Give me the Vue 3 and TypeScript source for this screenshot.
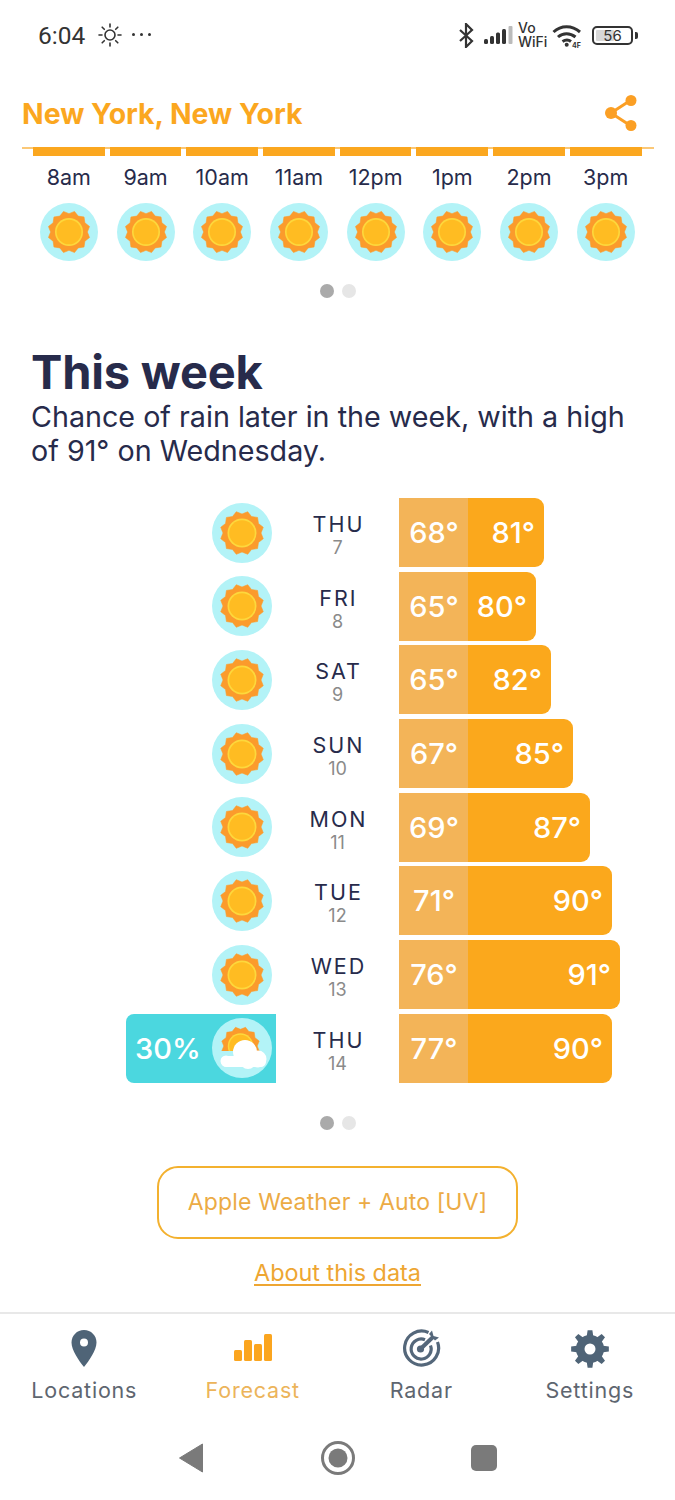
<script setup lang="ts">
const hours = ['8am', '9am', '10am', '11am', '12pm', '1pm', '2pm', '3pm']

interface Day {
  name: string
  date: number
  low: number
  high: number
  end: number
  rain?: number
}

// end = right edge of the temperature bar, measured from the bar's start
const days: Day[] = [
  { name: 'THU', date: 7, low: 68, high: 81, end: 145 },
  { name: 'FRI', date: 8, low: 65, high: 80, end: 137 },
  { name: 'SAT', date: 9, low: 65, high: 82, end: 152 },
  { name: 'SUN', date: 10, low: 67, high: 85, end: 174 },
  { name: 'MON', date: 11, low: 69, high: 87, end: 191 },
  { name: 'TUE', date: 12, low: 71, high: 90, end: 213 },
  { name: 'WED', date: 13, low: 76, high: 91, end: 221 },
  { name: 'THU', date: 14, low: 77, high: 90, end: 213, rain: 30 },
]

const polar = (r: number, a: number, cx = 30, cy = 30) =>
  `${(cx + r * Math.cos(a)).toFixed(2)},${(cy + r * Math.sin(a)).toFixed(2)}`

// 12 pointed sun rays
const sunRays = Array.from({ length: 24 }, (_, i) =>
  polar(i % 2 ? 19 : 22, (i * Math.PI) / 12 - Math.PI / 12),
).join(' ')

// 8 tooth cog for the settings tab
const cogPath = (() => {
  const pts: string[] = []
  for (let i = 0; i < 8; i++) {
    const a = (i * Math.PI) / 4 - Math.PI / 2
    const step = Math.PI / 8
    pts.push(polar(13.5, a - step * 0.62, 20, 20))
    pts.push(polar(19, a - step * 0.32, 20, 20))
    pts.push(polar(19, a + step * 0.32, 20, 20))
    pts.push(polar(13.5, a + step * 0.62, 20, 20))
  }
  return pts.join(' ')
})()
</script>

<template>
  <div class="screen">
    <svg class="defs" width="0" height="0">
      <defs>
        <symbol id="sun-rays" viewBox="0 0 60 60">
          <polygon :points="sunRays" fill="#fb9b2c" stroke="#fb9b2c" stroke-width="0.6" stroke-linejoin="round" />
          <circle cx="30" cy="30" r="14.500" fill="#fdd83c" />
          <circle cx="30" cy="30" r="12.800" fill="#ffbc22" />
        </symbol>
        <clipPath id="half-sun">
          <rect x="0" y="0" width="60" height="33" />
        </clipPath>
      </defs>
    </svg>

    <header class="status">
      <span class="clock">6:04</span>
      <svg class="status-sun" width="24" height="24" viewBox="0 0 24 24" fill="none" stroke="#333" stroke-width="1.6" stroke-linecap="round">
        <circle cx="12" cy="12" r="5" />
        <path d="M12 1v3M12 20v3M1 12h3M20 12h3M4.2 4.2l2.1 2.1M17.7 17.7l2.1 2.1M4.2 19.800l2.100-2.100M17.700 6.300l2.100-2.100" />
      </svg>
      <span class="more"><i></i><i></i><i></i></span>
      <span class="status-right">
        <svg width="16" height="25" viewBox="0 0 16 25" fill="none" stroke="#333" stroke-width="2.200">
          <path d="M2 7l12 11-6 6V1l6 6L2 18" />
        </svg>
        <svg class="signal" width="29" height="19" viewBox="0 0 29 19">
          <rect x="0" y="13" width="4" height="5" rx="1.500" fill="#333" />
          <rect x="6" y="10" width="4" height="8" rx="1.500" fill="#333" />
          <rect x="12" y="6.500" width="4" height="11.500" rx="1.500" fill="#333" />
          <rect x="18" y="3" width="4" height="15" rx="1.500" fill="#333" />
          <rect x="24.500" y="0" width="4" height="18" rx="1" fill="#bbb" />
        </svg>
        <span class="vowifi">Vo<br />WiFi</span>
        <svg class="wifi" width="31" height="25" viewBox="0 0 31 25" fill="none" stroke="#333" stroke-width="3">
          <path d="M1.500 9C9 2 20 2 28 9" />
          <path d="M6 14c5-4.500 12-4.500 17.500 0" />
          <path d="M10.500 18.500c3-2 6-2 8.500 0" />
          <circle cx="14.700" cy="21.800" r="2" fill="#333" stroke="none" />
          <text x="20" y="24.500" font-size="7" font-weight="700" fill="#333" stroke="none">4F</text>
        </svg>
        <span class="battery"><span class="battery-fill"></span><b>56</b></span>
        <i class="battery-cap"></i>
      </span>
    </header>

    <section class="location">
      <h2>New York, New York</h2>
      <svg width="36" height="38" viewBox="0 0 36 38">
        <path d="M27 6L7 19l20 13" fill="none" stroke="#fb9f24" stroke-width="3" />
        <circle cx="27" cy="6.500" r="5.500" fill="#fb9f24" />
        <circle cx="7" cy="19" r="6" fill="#fb9f24" />
        <circle cx="27" cy="31.500" r="5.500" fill="#fb9f24" />
      </svg>
    </section>

    <section class="hours">
      <div v-for="hour in hours" :key="hour" class="hour">
        <span class="hour-bar"></span>
        <span class="hour-label">{{ hour }}</span>
        <span class="badge badge-sm">
          <svg width="58" height="58"><use href="#sun-rays" /></svg>
        </span>
      </div>
    </section>

    <div class="pager pager-top"><i class="on"></i><i></i></div>

    <section class="week">
      <h1>This week</h1>
      <p>Chance of rain later in the week, with a high of 91° on Wednesday.</p>
    </section>

    <section class="days">
      <div v-for="day in days" :key="day.name + day.date" class="day">
        <div class="day-icon" :class="{ rainy: day.rain }">
          <span v-if="day.rain" class="chance">{{ day.rain }}%</span>
          <span class="badge">
            <svg v-if="!day.rain" width="60" height="60"><use href="#sun-rays" /></svg>
            <svg v-else width="60" height="60" viewBox="0 0 60 60">
              <g clip-path="url(#half-sun)">
                <g transform="translate(28.500 28) scale(.88) translate(-30 -30)"><use href="#sun-rays" width="60" height="60" /></g>
              </g>
              <g fill="#fff">
                <circle cx="33" cy="34" r="12" />
                <circle cx="46" cy="41" r="8.500" />
                <circle cx="36" cy="43" r="8" />
                <circle cx="14" cy="43" r="5.500" />
                <rect x="9" y="38" width="45" height="11" rx="5.500" />
              </g>
            </svg>
          </span>
        </div>
        <div class="day-name">
          <span>{{ day.name }}</span>
          <small>{{ day.date }}</small>
        </div>
        <div class="temps" :style="{ width: day.end + 'px' }">
          <span class="low">{{ day.low }}°</span>
          <span class="high">{{ day.high }}°</span>
        </div>
      </div>
    </section>

    <div class="pager pager-week"><i class="on"></i><i></i></div>

    <button class="source">Apple Weather + Auto [UV]</button>
    <a class="about">About this data</a>

    <nav class="tabs">
      <div class="tab">
        <svg width="40" height="40" viewBox="0 0 40 40">
          <path fill-rule="evenodd" d="M20 1c7 0 12.500 5.500 12.500 12.500C32.500 21 25 32 20 38 15 32 7.500 21 7.500 13.500 7.500 6.500 13 1 20 1zm0 8.500a4 4 0 1 0 0 8 4 4 0 0 0 0-8z" fill="#4f6477" />
        </svg>
        <span>Locations</span>
      </div>
      <div class="tab active">
        <svg width="40" height="40" viewBox="0 0 40 40">
          <g fill="#fba51f">
            <rect x="1" y="21" width="8" height="11" rx="1.500" />
            <rect x="11" y="11" width="8" height="21" rx="1.500" />
            <rect x="21" y="15" width="8" height="17" rx="1.500" />
            <rect x="31" y="5" width="8" height="27" rx="1.500" />
          </g>
        </svg>
        <span>Forecast</span>
      </div>
      <div class="tab">
        <svg width="40" height="40" viewBox="0 0 40 40" fill="none" stroke="#54677a" stroke-width="3.200">
          <path d="M27.500 3.500A17 17 0 1 0 36.500 13" />
          <path d="M24 10.800A10 10 0 1 0 29.500 16.500" />
          <circle cx="19.500" cy="20" r="3.600" fill="#54677a" stroke="none" />
          <path d="M20 19.500L32 8" stroke-width="4" />
          <path d="M28 5l3-3.500 1.500 5.500 5.500 1.500-4 3z" fill="#54677a" stroke="none" />
        </svg>
        <span>Radar</span>
      </div>
      <div class="tab">
        <svg width="40" height="40" viewBox="0 0 40 40">
          <polygon :points="cogPath" fill="#4f6477" />
          <circle cx="20" cy="20" r="14" fill="#4f6477" />
          <circle cx="20" cy="20" r="5.500" fill="#fff" />
        </svg>
        <span>Settings</span>
      </div>
    </nav>

    <div class="system-nav">
      <svg width="26" height="30" viewBox="0 0 26 30"><path d="M24.500 1v28L1.500 15z" fill="#7a7a7a" stroke="#7a7a7a" stroke-linejoin="round" /></svg>
      <svg width="36" height="36" viewBox="0 0 36 36">
        <circle cx="18" cy="18" r="15.500" fill="none" stroke="#7a7a7a" stroke-width="3" />
        <circle cx="18" cy="18" r="9.500" fill="#7a7a7a" />
      </svg>
      <span class="square"></span>
    </div>
  </div>
</template>

<style scoped>
.screen {
  width: 675px;
  height: 1500px;
  overflow: hidden;
  background: #fff;
  font-family: Inter, "Liberation Sans", sans-serif;
  color: #272b4b;
  display: flex;
  flex-direction: column;
}

.defs {
  position: absolute;
}

.status {
  height: 70px;
  display: flex;
  align-items: center;
  padding: 0 37px 0 38px;
  color: #333;
}

.clock {
  font-family: Roboto, sans-serif;
  font-size: 24.500px;
  font-weight: 400;
}

.status-sun {
  margin-left: 13px;
}

.more {
  display: flex;
  gap: 5px;
  margin-left: 10px;
  margin-bottom: 2px;
}

.more i {
  width: 3px;
  height: 3px;
  border-radius: 50%;
  background: #333;
}

.status-right {
  margin-left: auto;
  display: flex;
  align-items: center;
}

.signal {
  margin-left: 10px;
}

.vowifi {
  margin-left: 5px;
  font-size: 14px;
  font-weight: 500;
  line-height: 14px;
  width: 28px;
}

.wifi {
  margin-left: 6px;
}

.battery {
  position: relative;
  margin-left: 9px;
  width: 41px;
  height: 19px;
  border: 2px solid #333;
  border-radius: 5px;
  box-sizing: border-box;
  padding: 2px;
  display: flex;
}

.battery-fill {
  width: 54%;
  background: #d8d8d8;
  border-radius: 1px;
}

.battery b {
  position: absolute;
  inset: 0;
  text-align: center;
  font-size: 15px;
  font-weight: 400;
  line-height: 15px;
}

.battery-cap {
  width: 3px;
  height: 7px;
  margin-left: 2px;
  background: #333;
  border-radius: 0 2px 2px 0;
}

.location {
  height: 79px;
  box-sizing: border-box;
  margin: 0 21px 0 22px;
  padding: 9px 14px 0 0;
  display: flex;
  justify-content: space-between;
  align-items: center;
  border-bottom: 2px solid #fbc877;
}

.location h2 {
  margin: 0;
  font-size: 28.400px;
  font-weight: 700;
  color: #fba71f;
}

.hours {
  display: flex;
  gap: 5px;
  margin: -2px 0 0 33px;
}

.hour {
  width: 71.700px;
  display: flex;
  flex-direction: column;
  align-items: center;
}

.hour-bar {
  width: 100%;
  height: 9px;
  background: #fba71f;
}

.hour-label {
  margin-top: 8px;
  font-size: 21.500px;
  line-height: 27px;
  margin-bottom: 12px;
}

.badge {
  display: block;
  width: 60px;
  height: 60px;
  border-radius: 50%;
  background: #b3f3f7;
  flex: none;
}

.badge svg {
  display: block;
}

.badge-sm {
  width: 58px;
  height: 58px;
}

.pager {
  display: flex;
  justify-content: center;
  gap: 8px;
}

.pager i {
  width: 14px;
  height: 14px;
  border-radius: 50%;
  background: #e6e6e6;
}

.pager i.on {
  background: #aaa;
}

.pager-top {
  margin-top: 23px;
}

.week {
  margin: 46px 32px 0 31px;
}

.week h1 {
  margin: 0;
  font-size: 47px;
  line-height: 56px;
  font-weight: 700;
  letter-spacing: -0.200px;
}

.week p {
  margin: 0;
  font-size: 28.700px;
  line-height: 34px;
}

.days {
  margin-top: 30px;
  display: flex;
  flex-direction: column;
  gap: 4.700px;
}

.day {
  display: grid;
  grid-template-columns: 276px 123px 1fr;
  height: 69px;
  align-items: stretch;
}

.day-icon {
  justify-self: end;
  display: flex;
  align-items: center;
  padding-right: 4px;
}

.rainy {
  width: 150px;
  box-sizing: border-box;
  justify-content: space-between;
  padding-left: 9px;
  background: #4bd7df;
  border-radius: 8px 0 0 8px;
}

.chance {
  font-size: 29px;
  font-weight: 500;
  color: #fff;
}

.day-name {
  display: flex;
  flex-direction: column;
  align-items: center;
  justify-content: center;
  padding-top: 4px;
  font-size: 21.500px;
  line-height: 26px;
  letter-spacing: 2px;
}

.day-name span {
  margin-right: -2px;
}

.day-name small {
  font-size: 18px;
  line-height: 21px;
  letter-spacing: 0;
  color: #8a8a8a;
}

.temps {
  display: flex;
  border-radius: 0 9px 9px 0;
  overflow: hidden;
  background: #fba81c;
  color: #fff;
  font-size: 29px;
  font-weight: 500;
  line-height: 69px;
}

.low {
  width: 69px;
  box-sizing: border-box;
  padding-left: 1px;
  text-align: center;
  background: #f3b458;
  flex: none;
}

.high {
  flex: 1;
  text-align: right;
  padding-right: 9px;
}

.pager-week {
  margin-top: 33px;
}

.source {
  align-self: center;
  margin-top: 36px;
  width: 361px;
  height: 73px;
  border: 2px solid #f3b12f;
  border-radius: 21px;
  background: #fff;
  color: #ecab45;
  font-family: inherit;
  font-size: 23px;
  letter-spacing: 0.150px;
}

.about {
  align-self: center;
  margin-top: 19px;
  font-size: 23.400px;
  line-height: 29px;
  color: #eea632;
  text-decoration: underline;
  text-underline-offset: 3px;
}

.tabs {
  margin-top: 25px;
  height: 112px;
  box-sizing: border-box;
  border-top: 2px solid #e8e8e8;
  display: grid;
  grid-template-columns: repeat(4, 168.500px);
  justify-content: start;
  padding-top: 15px;
}

.tab {
  display: flex;
  flex-direction: column;
  align-items: center;
  color: #5e6670;
  font-size: 21.500px;
  line-height: 28px;
  letter-spacing: 0.800px;
}

.tab svg {
  margin-bottom: 7px;
}

.tab.active {
  color: #ecb45a;
}

.system-nav {
  display: flex;
  justify-content: center;
  align-items: center;
  height: 60px;
  margin-top: 4px;
  gap: 115.500px;
}

.square {
  width: 26px;
  height: 26px;
  border-radius: 5px;
  background: #7a7a7a;
}
</style>
